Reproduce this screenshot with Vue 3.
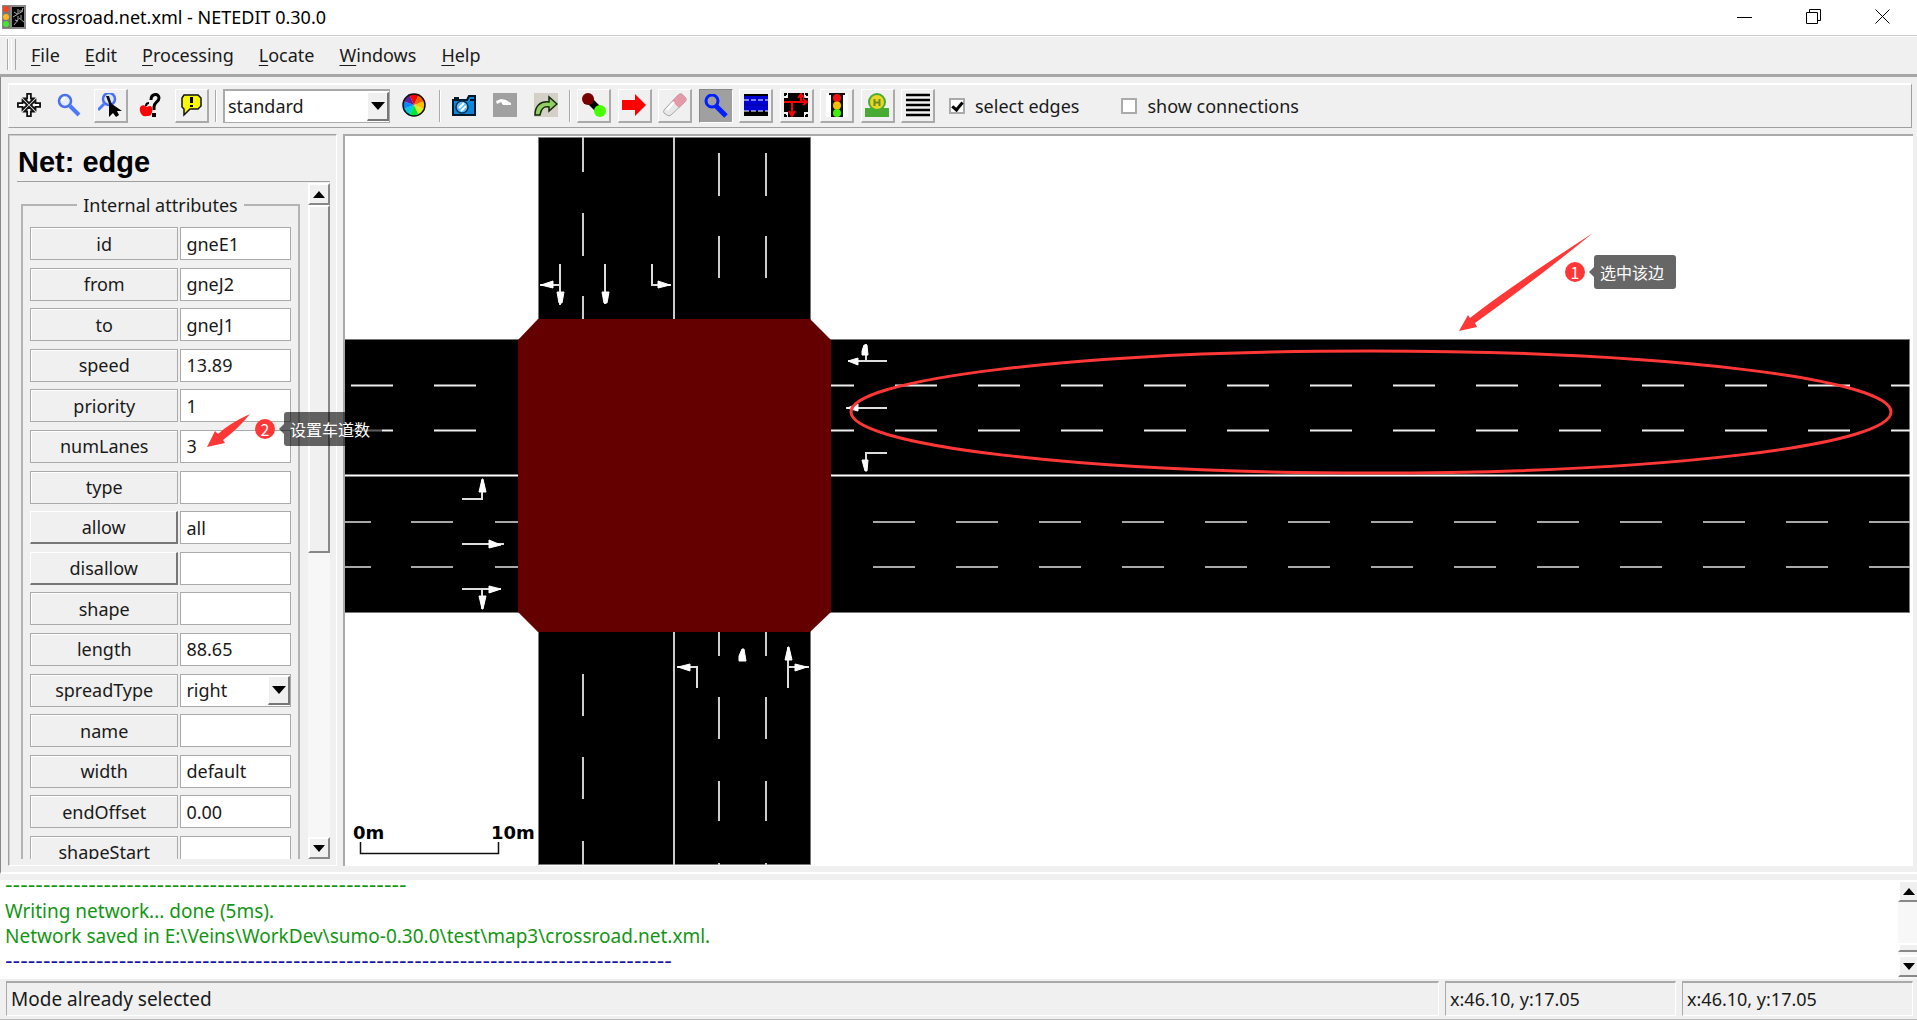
<script setup>
import { ref } from 'vue'

const menus = ['File', 'Edit', 'Processing', 'Locate', 'Windows', 'Help']

const attributes = ref([
  { name: 'id', value: 'gneE1' },
  { name: 'from', value: 'gneJ2' },
  { name: 'to', value: 'gneJ1' },
  { name: 'speed', value: '13.89' },
  { name: 'priority', value: '1' },
  { name: 'numLanes', value: '3' },
  { name: 'type', value: '' },
  { name: 'allow', value: 'all', kind: 'button' },
  { name: 'disallow', value: '', kind: 'button' },
  { name: 'shape', value: '' },
  { name: 'length', value: '88.65' },
  { name: 'spreadType', value: 'right', kind: 'select' },
  { name: 'name', value: '' },
  { name: 'width', value: 'default' },
  { name: 'endOffset', value: '0.00' },
  { name: 'shapeStart', value: '' }
])

const scheme = ref('standard')
const selectEdges = ref(true)
const showConnections = ref(false)

const shortRule = '-'.repeat(53)
const longRule = '-'.repeat(88)

// Turn arrows painted on the lanes: shaft path plus the head outlines
const turns = [
  { shaft: 'M560 264V305M560 285H540', heads: ['M557 292h7l-2 11h-3z', 'M553 281v7l-12-3z'] },
  { shaft: 'M605 264V304', heads: ['M602 292h7l-2 11h-3z'] },
  { shaft: 'M652 264V285H671', heads: ['M658 281v7l12-3z'] },
  { shaft: 'M462 499H482V480', heads: ['M479 492h7l-3-13h-1z'] },
  { shaft: 'M462 544H504', heads: ['M489 540v8l12-3z'] },
  { shaft: 'M462 589H501M482 589V609', heads: ['M489 586v7l12-4z', 'M479 596h7l-3 13h-1z'] },
  { shaft: 'M697 688V667H677', heads: ['M690 664v7l-12-4z'] },
  { shaft: '', heads: ['M739 661v-5l3-7h2l2 12z'] },
  { shaft: 'M788 688V647M788 667H809', heads: ['M785 660h7l-3-13h-1z', 'M795 664v7l12-4z'] },
  { shaft: 'M887 361H848M866 361V344', heads: ['M858 358v7l-10-4z', 'M862 355v-4l2-6h3l1 10z'] },
  { shaft: 'M887 408H846', heads: ['M858 404v7l-11-3z'] },
  { shaft: 'M887 453H866V471', heads: ['M862 460h6l-1 11h-2z'] }
]
</script>

<template>
  <div class="app">
    <header class="titlebar">
      <svg class="logo" viewBox="0 0 24 24" aria-hidden="true">
        <rect width="24" height="24" fill="#888" />
        <rect x="1" y="1" width="7" height="22" fill="#777" />
        <circle cx="4" cy="4" r="3" fill="#ff4020" /><circle cx="4" cy="12" r="3" fill="#ffb820" /><circle cx="4" cy="19" r="3" fill="#40e830" />
        <rect x="10" y="2" width="12" height="20" fill="#000" />
        <path d="M11 12l5-3 0-5M16 9l5-3M16 11v4l-4 5M17 13l5 4M17 6h3l1-3M12 7l3 2M19 10v4M13 15l3 1" fill="none" stroke="#aaa" />
      </svg>
      <h1>crossroad.net.xml - NETEDIT 0.30.0</h1>
      <div class="window-buttons">
        <button aria-label="Minimize"><svg viewBox="0 0 16 16"><path d="M0 8.5h15" /></svg></button>
        <button aria-label="Restore"><svg viewBox="0 0 16 16"><path d="M.5 3.5h11v11H.5zM3.500 3.500V.5h11v11h-3" /></svg></button>
        <button aria-label="Close"><svg viewBox="0 0 16 16"><path d="M.5.5l14 14M14.500.5l-14 14" /></svg></button>
      </div>
    </header>

    <nav class="menubar">
      <span class="grip"></span>
      <button v-for="m in menus" :key="m"><u>{{ m[0] }}</u>{{ m.slice(1) }}</button>
    </nav>

    <div class="frame">
      <div class="toolbar">
        <div class="tools view-tools">
          <button class="tool flat" aria-label="Recenter view">
            <svg viewBox="0 0 26 26"><path d="M11 1h4v5h3l-5 5-5-5h3zM11 25h4v-5h3l-5-5-5 5h3zM1 11v4h5v3l5-5-5-5v3zM25 11v4h-5v3l-5-5 5-5v3z" fill="#fff" stroke="#111" stroke-width="2" /></svg>
          </button>
          <button class="tool flat" aria-label="Zoom">
            <svg viewBox="0 0 24 24"><path d="M13 13l9 9" stroke="#4a78ff" stroke-width="4" /><circle cx="8" cy="8" r="6" fill="#e4eefa" stroke="#4a6ff0" stroke-width="2.500" /><path d="M5 8a3 3 0 013-3" stroke="#fff" stroke-width="2" fill="none" /></svg>
          </button>
          <button class="tool" aria-label="Zoom style">
            <svg viewBox="0 0 24 24"><path d="M6 11l-6 6" stroke="#4a78ff" stroke-width="3" /><circle cx="11" cy="6" r="6" fill="#dce8f8" stroke="#4a6ff0" stroke-width="2.500" /><path d="M8 3h3l2 6 2 4-4-2z" fill="#111" /><path d="M11 9v15l4-4 3 4 3-2-2-4h5z" fill="#000" /></svg>
          </button>
          <button class="tool flat" aria-label="What is this">
            <svg viewBox="0 0 24 24"><path d="M8 14C3 10 0 14 1 18s3 6 7 5c5 1 6-5 5-8s-3-2-5-1z" fill="#f00" /><path d="M7 13c0-3 2-3 3-3" stroke="#000" stroke-width="2" fill="none" /><path d="M12 7c0-7 8-7 8-2 0 4-5 4-5 9v3" stroke="#000" stroke-width="3" fill="none" /><rect x="13" y="20" width="4" height="4" /></svg>
          </button>
          <button class="tool" aria-label="Show tooltips">
            <svg viewBox="0 0 24 24"><path d="M4 2h14l3 3v8l-3 3h-8l-6 6v-6l-2-2V5z" fill="#f8f800" stroke="#111" stroke-width="1.500" /><path d="M11.500 4v6M11.500 12v2" stroke="#000" stroke-width="3" /></svg>
          </button>
        </div>
        <span class="divider"></span>
        <div class="combo scheme">
          <select v-model="scheme" aria-label="Coloring scheme"><option>standard</option></select>
          <span class="drop"><svg viewBox="0 0 14 8"><path d="M0 0h14L7 8z" /></svg></span>
        </div>
        <button class="tool flat wheel" aria-label="Edit colors">
          <svg viewBox="0 0 24 24"><path d="M12 12L7 1h10z" fill="#f00" /><path d="M12 12l5-11 6 7z" fill="#ff6000" /><path d="M12 12l11-4v8z" fill="#ffc000" /><path d="M12 12l11 4-6 7z" fill="#d8f020" /><path d="M12 12l5 11H7z" fill="#00e83c" /><path d="M12 12L7 23l-6-7z" fill="#00c8e0" /><path d="M12 12L1 16V8z" fill="#0088ff" /><path d="M12 12L1 8l6-7z" fill="#6020a0" /><circle cx="12" cy="12" r="11" fill="none" stroke="#111" stroke-width="1.500" /></svg>
        </button>
        <span class="divider"></span>
        <div class="tools history">
          <button class="tool flat" aria-label="Snapshot">
            <svg viewBox="0 0 24 24"><path d="M1 7h14l2-4h6v19H1z" fill="#0c86d8" stroke="#001828" stroke-width="2" /><path d="M2 5h5M18 7h5" stroke="#001828" stroke-width="2" /><circle cx="10" cy="14" r="6" fill="#60c0ff" stroke="#003050" stroke-width="1.500" /><path d="M7 15l5-5M9 18l5-5" stroke="#fff" stroke-width="2" /></svg>
          </button>
          <button class="tool flat" aria-label="Undo" disabled>
            <svg viewBox="0 0 24 24"><rect width="24" height="24" fill="#a0a0a0" /><path d="M3 8l5-2 5 1 5 3v2H10L8 9l-4 2z" fill="#fff" /></svg>
          </button>
          <button class="tool flat" aria-label="Redo">
            <svg viewBox="0 0 24 24"><rect width="24" height="24" fill="#d4d0c8" /><path d="M1 22c0-9 5-14 14-13V4l8 7-8 7v-4c-6-1-8 2-9 8z" fill="#8fd060" stroke="#16280c" stroke-width="1.500" /></svg>
          </button>
        </div>
        <span class="divider"></span>
        <div class="tools modes">
          <button class="tool" aria-label="Create edge"><svg viewBox="0 0 24 24"><path d="M6 6l12 12" stroke="#000" stroke-width="7" /><circle cx="6" cy="6" r="6" fill="#780000" /><circle cx="18" cy="18" r="6" fill="#46ff00" /></svg></button>
          <button class="tool" aria-label="Move"><svg viewBox="0 0 24 24"><path d="M0 7h13V1l11 11-11 11v-6H0z" fill="#f00" /></svg></button>
          <button class="tool" aria-label="Delete"><svg viewBox="0 0 24 24"><path d="M1 17L15 2q2-2 4-1l4 4q1 2-1 4L8 22q-2 2-4 0l-3-2q-1-1 0-3z" fill="#e8e8ea" stroke="#a8a8ac" /><path d="M9 8l6-6q2-2 4-1l4 4q1 2-1 4l-6 6z" fill="#e39aa6" /><path d="M4 17l7-8" stroke="#fff" stroke-width="2" /></svg></button>
          <button class="tool pressed" aria-label="Inspect"><svg viewBox="0 0 24 24"><path d="M12 12l10 10" stroke="#0020ff" stroke-width="5" /><circle cx="8" cy="7" r="6" fill="none" stroke="#0020ff" stroke-width="3" /></svg></button>
          <button class="tool" aria-label="Select"><svg viewBox="0 0 24 24"><rect y="1" width="24" height="22" fill="#000" /><rect y="3" width="24" height="15" fill="#0000d0" /><path d="M0 7h24M0 18h24" stroke="#fff" stroke-dasharray="5 2" /><path d="M0 12h24" stroke="#0000a0" /></svg></button>
          <button class="tool" aria-label="Connect"><svg viewBox="0 0 24 24"><path d="M4 0h16v5h4v14h-4v5H4v-5H0V5h4z" fill="#000" /><path d="M0 1h3M21 1h3M0 23h3M21 23h3M1 0v3M23 0v3M1 21v3M23 21v3" stroke="#000" stroke-width="2" /><path d="M0 9h22M8 9v13M17 9V1M5 18l3 5 3-5M14 5l3-4 3 4M19 6l4 3-4 3" stroke="#f00" stroke-width="2" fill="none" /></svg></button>
          <button class="tool" aria-label="Traffic lights"><svg viewBox="0 0 24 24"><rect x="1" width="22" height="24" fill="#fff" /><path d="M4 0h16v2h-2v22H6V2H4z" fill="#111" /><circle cx="12" cy="5" r="4" fill="#f01010" /><circle cx="12" cy="12.500" r="4" fill="#f8c000" /><circle cx="12" cy="20" r="4" fill="#40f000" /></svg></button>
          <button class="tool" aria-label="Additionals"><svg viewBox="0 0 24 24"><path d="M0 15h7v-3h10v3h7v9H0z" fill="#48ac34" /><circle cx="12" cy="9" r="9" fill="#48ac34" /><circle cx="12" cy="9" r="7" fill="#e8d820" /><path d="M9.500 6v7M14.500 6v7M9.500 9.500h5" stroke="#6a8c20" stroke-width="2" /></svg></button>
          <button class="tool" aria-label="Crossings"><svg viewBox="0 0 24 24"><path d="M0 2h24M0 7h24M0 12h24M0 17h24M0 22h24" stroke="#000" stroke-width="2.500" /></svg></button>
        </div>
        <label class="check first"><input v-model="selectEdges" type="checkbox" />select edges</label>
        <label class="check"><input v-model="showConnections" type="checkbox" />show connections</label>
      </div>

      <main class="workspace">
        <aside class="inspector">
          <h2>Net: edge</h2>
          <div class="scroller">
            <fieldset>
              <legend>Internal attributes</legend>
              <div class="rows">
                <div v-for="a in attributes" :key="a.name" class="row">
                  <button v-if="a.kind === 'button'" class="key raised">{{ a.name }}</button>
                  <label v-else class="key" :for="'attr-' + a.name">{{ a.name }}</label>
                  <div v-if="a.kind === 'select'" class="combo value">
                    <select :id="'attr-' + a.name" v-model="a.value"><option>right</option><option>center</option></select>
                    <span class="drop"><svg viewBox="0 0 14 8"><path d="M0 0h14L7 8z" /></svg></span>
                  </div>
                  <input v-else :id="'attr-' + a.name" v-model="a.value" class="value" type="text" :aria-label="a.name" />
                </div>
              </div>
            </fieldset>
            <div class="scrollbar">
              <button class="step" aria-label="Scroll up"><svg viewBox="0 0 12 7"><path d="M0 7h12L6 0z" /></svg></button>
              <span class="thumb"></span>
              <span class="track"></span>
              <button class="step" aria-label="Scroll down"><svg viewBox="0 0 12 7"><path d="M0 0h12L6 7z" /></svg></button>
            </div>
          </div>
        </aside>

        <section class="viewport">
          <svg class="network" viewBox="345 136 1568 730" preserveAspectRatio="xMinYMin slice" role="img" aria-label="Road network">
            <!-- roads -->
            <g stroke="#777" stroke-width="1">
              <path d="M538.500 137.500H810.500V330H538.500zM538.500 620H810.500V864.500H538.500z" />
              <path d="M340 339.500H530V612.500H340zM820 339.500H1909.500V612.500H820z" />
            </g>
            <path d="M538 319H810L831 340V612L810 632H538L518 612V340z" fill="#640000" />
            <!-- lane markings -->
            <g fill="none" stroke="#ccc" stroke-width="2">
              <path d="M583 137V172M583 213V256M583 296V319M583 674V716M583 757V799M583 841V865" />
              <path d="M674 137V319M674 632V865" />
              <path d="M719 153V196M719 236V278M719 632V656M719 697V739M719 781V821M719 863V865" />
              <path d="M766 153V196M766 236V278M766 632V656M766 697V739M766 781V821M766 863V865" />
              <path d="M351 385.500H393M434 385.500H476M831 385.500H854M351 430.500H393M434 430.500H476M831 430.500H854" stroke="#eee" />
              <path d="M895 385.500H1910M895 430.500H1910" stroke="#eee" stroke-dasharray="42 41" />
              <path d="M345 475.500H518M831 475.500H1910" stroke="#fff" />
              <path d="M345 522H371M411 522H453M495 522H518M345 567H371M411 567H453M495 567H518" stroke="#a8a8a8" />
              <path d="M873 522H1910M873 567H1910" stroke="#a8a8a8" stroke-dasharray="42 41" />
            </g>
            <g v-for="(t, i) in turns" :key="i">
              <path :d="t.shaft" fill="none" stroke="#ddd" stroke-width="2" />
              <path v-for="h in t.heads" :key="h" :d="h" fill="#fff" stroke="#fff" stroke-width="1" />
            </g>
            <!-- scale -->
            <path d="M360.500 842V853.500H498.500V842" fill="none" stroke="#111" stroke-width="1.500" />
            <text x="353" y="839">0m</text>
            <text x="491" y="839">10m</text>
          </svg>
        </section>

        <svg class="marks" viewBox="1 128 1916 744" preserveAspectRatio="xMinYMin slice" aria-hidden="true">
          <ellipse cx="1371" cy="412" rx="520" ry="61" fill="none" stroke="#ff3737" stroke-width="3" />
          <path d="M1459 331L1468 315L1470 318Q1505 290 1593 233Q1530 284 1475 323L1477 327z" fill="#ff3737" />
          <path d="M207 447L215 431L218 434Q230 423 250 414Q238 429 223 440L225 443z" fill="#ff3737" />
        </svg>
        <div class="note note-edge"><b>1</b><span>选中该边</span></div>
        <div class="note note-lanes"><b>2</b><span>设置车道数</span></div>
      </main>
    </div>

    <section class="log">
      <div class="lines">
        <p class="rule">{{ shortRule }}</p>
        <p>Writing network... done (5ms).</p>
        <p>Network saved in E:\Veins\WorkDev\sumo-0.30.0\test\map3\crossroad.net.xml.</p>
        <p class="rule blue">{{ longRule }}</p>
      </div>
      <div class="scrollbar">
        <button class="step" aria-label="Scroll log up"><svg viewBox="0 0 12 7"><path d="M0 7h12L6 0z" /></svg></button>
        <span class="track"></span>
        <span class="thumb"></span>
        <button class="step" aria-label="Scroll log down"><svg viewBox="0 0 12 7"><path d="M0 0h12L6 7z" /></svg></button>
      </div>
    </section>

    <footer class="statusbar">
      <output class="message">Mode already selected</output>
      <output class="coords">x:46.10, y:17.05</output>
      <output class="coords">x:46.10, y:17.05</output>
    </footer>
  </div>
</template>

<style>
body {
  margin: 0;
  background: #f0f0f0;
}
</style>

<style scoped>
.app,
.app * {
  box-sizing: border-box;
}
.app {
  display: flex;
  flex-direction: column;
  min-height: 100vh;
  background: #f0f0f0;
  color: #1a1a1a;
  font: 18px/24px "Noto Sans", "Noto Sans CJK SC", sans-serif;
  overflow: hidden;
}
button,
input,
select {
  font: inherit;
  color: inherit;
  margin: 0;
  padding: 0;
  border: 0;
  border-radius: 0;
  background: none;
  appearance: none;
}
svg {
  display: block;
}

.titlebar {
  display: flex;
  align-items: center;
  height: 36px;
  padding-bottom: 2px;
  background: #fff;
  border-bottom: 1px solid #ccc;
}
.logo {
  width: 24px;
  height: 24px;
  margin-left: 2px;
}
h1 {
  flex: 1;
  margin: 0 0 0 5px;
  font-size: 18px;
  font-weight: 400;
  color: #000;
}
.window-buttons {
  display: flex;
}
.window-buttons button {
  display: grid;
  place-items: center;
  width: 69px;
  height: 32px;
}
.window-buttons svg {
  width: 16px;
  height: 16px;
  fill: none;
  stroke: #000;
}

.menubar {
  display: flex;
  align-items: center;
  gap: 25px;
  height: 41px;
  padding: 0 0 2px 7px;
  border-top: 1px solid #fff;
  border-bottom: 3px solid #a6a6a6;
}
.grip {
  width: 9px;
  height: 31px;
  margin-right: -10px;
  border: solid #aaa;
  border-width: 0 1px;
  box-shadow: inset -3px 0 #f0f0f0, inset -4px 0 #fff, inset 1px 0 #fff;
}
.menubar u {
  text-underline-offset: 3px;
}

.frame {
  flex: 1;
  display: flex;
  flex-direction: column;
  padding-top: 6px;
  border-left: 1px solid #888;
  border-bottom: 2px solid #fff;
}
.toolbar {
  display: flex;
  align-items: center;
  height: 45px;
  margin: 0 5px 0 7px;
  padding: 0 0 1px 3px;
  border: 1px solid #fff;
  border-right-color: #a0a0a0;
  border-bottom-color: #a0a0a0;
  border-top-width: 2px;
}
.tools {
  display: flex;
  justify-content: space-between;
}
.tool {
  display: grid;
  place-items: center;
  flex: none;
  width: 34px;
  height: 34px;
  border: 1px solid #fff;
  border-right: 2px solid #aaa;
  border-bottom: 2px solid #aaa;
}
.tool svg {
  width: 24px;
  height: 24px;
}
.tool.flat {
  border-color: transparent;
}
.tool.pressed {
  background: #a0a0a0;
  border: 1px solid #888;
  border-right-color: #fff;
  border-bottom-color: #fff;
}
.view-tools {
  width: 197px;
}
.history {
  width: 116px;
}
.modes {
  width: 358px;
}
.divider {
  width: 2px;
  height: 32px;
  margin: 0 6px;
  background: #aaa;
  border-right: 1px solid #fff;
}
.wheel {
  margin: 0 2px 0 7px;
}

.combo {
  position: relative;
  display: flex;
  background: #fff;
  border: 1px solid #aaa;
}
.combo select {
  flex: 1;
  width: 100%;
  padding-left: 5px;
}
.scheme {
  width: 167px;
  height: 34px;
  border-width: 2px 1px 1px 2px;
}
.scheme select {
  padding-left: 3px;
}
.drop {
  position: absolute;
  top: 1px;
  right: 0;
  bottom: 1px;
  width: 22px;
  display: grid;
  place-items: center;
  background: #f0f0f0;
  border: 1px solid #fff;
  border-right: 2px solid #777;
  border-bottom: 2px solid #777;
  pointer-events: none;
}
.drop svg {
  width: 14px;
  height: 8px;
}
.check {
  display: flex;
  align-items: center;
  gap: 10px;
  margin-left: 42px;
}
.check.first {
  margin-left: 14px;
}
.check input {
  display: grid;
  place-items: center;
  width: 16px;
  height: 16px;
  background: #fff;
  border: 2px solid #aaa;
}
.check input:checked::after {
  content: "";
  width: 4px;
  height: 8px;
  margin-bottom: 3px;
  border: solid #000;
  border-width: 0 3px 3px 0;
  transform: rotate(40deg);
}

.workspace {
  position: relative;
  flex: 1;
  display: flex;
  gap: 6px;
  padding: 6px 4px 6px 7px;
}
.inspector {
  display: flex;
  flex-direction: column;
  flex: none;
  width: 329px;
  padding: 9px 6px 6px 8px;
  border: 1px solid #fff;
  border-top-color: #a0a0a0;
  border-left-color: #a0a0a0;
  box-shadow: inset 1px 1px #ccc;
}
h2 {
  margin: 0;
  padding: 3px 1px 4px;
  font: bold 29px/30px "Liberation Sans", Arial, sans-serif;
  color: #000;
  border-bottom: 1px solid #a0a0a0;
}
.scroller {
  flex: 1 1 0;
  display: flex;
  justify-content: space-between;
  margin-top: 1px;
  min-height: 0;
  overflow: hidden;
}
fieldset {
  width: 279px;
  min-width: 0;
  height: 710px;
  margin: 10px 0 0 4px;
  padding: 10px 7px;
  border: 2px solid #b4b4b4;
}
legend {
  margin: 0 auto;
  padding: 0 6px;
}
.rows {
  display: flex;
  flex-direction: column;
  justify-content: space-between;
  height: 642px;
}
.row {
  display: flex;
  gap: 2px;
  height: 33px;
}
.key {
  display: flex;
  align-items: center;
  justify-content: center;
  width: 149px;
  border: 1px solid #aaa;
  box-shadow: inset 1px 1px #fff;
}
.raised {
  border: 1px solid #fff;
  border-right: 2px solid #777;
  border-bottom: 2px solid #777;
  box-shadow: none;
}
.value {
  width: 111px;
  min-width: 0;
  height: 33px;
  background: #fff;
  border: 1px solid #aaa;
}
input.value {
  padding-left: 5px;
}

.scrollbar {
  display: flex;
  flex-direction: column;
  width: 22px;
  background: #f7f7f7;
}
.step,
.thumb {
  flex: none;
  display: grid;
  place-items: center;
  background: #f0f0f0;
  border: 2px solid #fff;
  border-right-color: #888;
  border-bottom-color: #888;
}
.step {
  height: 22px;
}
.step svg {
  width: 12px;
  height: 7px;
}
.track {
  flex: 1;
}
.inspector .thumb {
  height: 348px;
}

.viewport {
  flex: 1;
  position: relative;
  min-width: 0;
  background: #fff;
  border: solid #aaa;
  border-width: 2px 0 0 2px;
  overflow: hidden;
}
.network,
.marks {
  position: absolute;
  inset: 0;
  width: 100%;
  height: 100%;
}
.network text {
  font: bold 18px "DejaVu Sans", sans-serif;
}
.marks {
  pointer-events: none;
}
.note {
  position: absolute;
  display: flex;
  align-items: center;
  gap: 9px;
  color: #fff;
  font: 16px/24px "Noto Sans CJK SC", sans-serif;
}
.note b {
  width: 20px;
  height: 20px;
  border-radius: 50%;
  background: #ff3737;
  font-weight: 400;
  line-height: 20px;
  text-align: center;
}
.note span {
  position: relative;
  padding: 5px 12px 5px 6px;
  border-radius: 3px;
  background: rgba(0, 0, 0, 0.6);
}
.note span::before {
  content: "";
  position: absolute;
  top: 12px;
  left: -5px;
  border: 5px solid transparent;
  border-right-color: rgba(0, 0, 0, 0.6);
  border-left: 0;
}
.note-edge {
  top: 127px;
  left: 1564px;
}
.note-lanes {
  top: 284px;
  left: 254px;
}

.log {
  display: flex;
  height: 105px;
  padding-top: 6px;
}
.lines {
  flex: 1;
  padding-left: 5px;
  background: #fff;
  color: #149614;
  font-size: 19px;
  overflow: hidden;
}
.lines p {
  margin: 0;
  height: 25px;
  line-height: 25px;
  white-space: pre;
}
.lines .rule {
  font-family: "DejaVu Sans", sans-serif;
  font-size: 21px;
}
.lines p.rule:first-child {
  height: 19px;
  line-height: 11px;
}
.lines .blue {
  color: #1414a0;
}
.log .scrollbar {
  width: 19px;
  padding-bottom: 2px;
}
.log .scrollbar > * {
  border-right-width: 0;
}
.log .thumb {
  height: 9px;
  margin-bottom: 3px;
}

.statusbar {
  display: flex;
  gap: 6px;
  height: 41px;
  padding: 2px 4px 3px 6px;
  border-bottom: 1px solid #bbb;
}
.statusbar output {
  padding: 4px;
  border: 1px solid #fff;
  border-top: 2px solid #aaa;
  border-left-color: #aaa;
}
.message {
  flex: 1;
  font-size: 19px;
}
.coords {
  width: 231px;
}
</style>
